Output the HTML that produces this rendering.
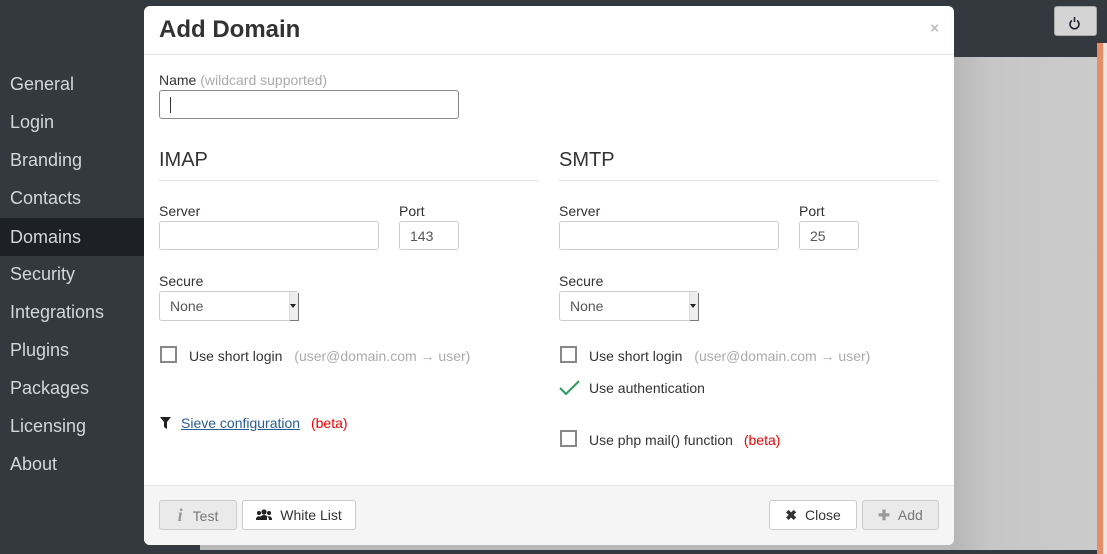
<!DOCTYPE html>
<html><head><style>
*{box-sizing:border-box}
body{margin:0;width:1107px;height:554px;overflow:hidden;background:#343940;font-family:"Liberation Sans",sans-serif;position:relative;color:#333}
.side{position:absolute;left:0;top:0;width:144px}
.side div{position:absolute;left:0;width:144px;height:38px;line-height:38px;padding-left:10px;font-size:18px;color:#d4d6d8}
.sel{background:#1d2024}
.gray{position:absolute;left:200px;top:57px;width:897px;height:493px;background:linear-gradient(90deg,#b8b8b8 755px,#c6c6c6 790px,#cbcbcb)}
.orange{position:absolute;left:1097px;top:43px;width:6px;height:511px;background:#e88c66}
.orange2{position:absolute;left:1103px;top:43px;width:4px;height:511px;background:#e6e6e6}
.pwr{position:absolute;left:1054px;top:6px;width:43px;height:30px;background:#d4d4d4;border:1px solid #aaa;border-radius:3px}
.modal{position:absolute;left:144px;top:6px;width:810px;height:539px;background:#fff;border-radius:6px;overflow:hidden}
.hdr{height:49px;border-bottom:1px solid #e5e5e5;padding:10px 15px}
.hdr h3{margin:0;font-size:24px;font-weight:bold;color:#333}
.x{position:absolute;right:15px;top:14px;color:#bbb;font-size:15px;font-weight:bold}
.abs{position:absolute;font-size:14px}
.inp{position:absolute;border:1px solid #ccc;border-radius:3px;height:29px;background:#fff;font-size:14px;padding:6px 10px;color:#555}
.h{position:absolute;font-size:20px;color:#333}
.line{position:absolute;height:1px;background:#e5e5e5}
.cb{position:absolute;width:17px;height:17px;border:2px solid #888}
.muted{color:#aaa}
.red{color:#e00}
.foot{position:absolute;left:0;top:479px;width:810px;height:60px;background:#f5f5f5;border-top:1px solid #e5e5e5}
.btn{position:absolute;top:14px;height:30px;border:1px solid #ccc;border-radius:3px;background:#fff;font-size:14px;line-height:28px;text-align:center;color:#333}
.dis{background:#eaeaea;color:#777}
.sel2{position:absolute;width:140px;height:30px;border:1px solid #ccc;border-radius:3px;font-size:14px;padding:6px 10px;color:#555;background:#fff}
.sel2:after{content:"";position:absolute;right:0;top:0;width:8px;height:28px;background:#eee;border-left:1px solid #ddd;box-shadow:1px 1px 0 #777}
.sel2:before{content:"";position:absolute;right:2px;top:12px;border:3px solid transparent;border-top:4px solid #222;z-index:2}
</style></head><body>
<div class="side">
<div style="top:65px">General</div><div style="top:103px">Login</div><div style="top:141px">Branding</div><div style="top:179px">Contacts</div><div class="sel" style="top:218px">Domains</div><div style="top:255px">Security</div><div style="top:293px">Integrations</div><div style="top:331px">Plugins</div><div style="top:369px">Packages</div><div style="top:407px">Licensing</div><div style="top:445px">About</div>
</div>
<div class="gray"></div><div class="orange"></div><div class="orange2"></div>
<div class="pwr"><svg width="43" height="30"><path d="M17 13.5a4.5 4.5 0 1 0 5 0" fill="none" stroke="#223" stroke-width="1.6"/><path d="M19.5 10v5" stroke="#223" stroke-width="1.6"/></svg></div>
<div class="modal">
<div class="hdr"><h3>Add Domain</h3></div><div class="x">×</div>
<div class="abs" style="left:15px;top:66px">Name <span class="muted">(wildcard supported)</span></div>
<div class="inp" style="left:15px;top:84px;width:300px;border-color:#888"><span style="display:inline-block;width:1px;height:16px;background:#333"></span></div>
<div class="h" style="left:15px;top:143px">IMAP</div><div class="line" style="left:15px;top:174px;width:380px"></div>
<div class="h" style="left:415px;top:143px">SMTP</div><div class="line" style="left:415px;top:174px;width:380px"></div>

<div class="abs" style="left:15px;top:197px">Server</div><div class="abs" style="left:255px;top:197px">Port</div>
<div class="inp" style="left:15px;top:215px;width:220px"></div><div class="inp" style="left:255px;top:215px;width:60px">143</div>
<div class="abs" style="left:15px;top:267px">Secure</div><div class="sel2" style="left:15px;top:285px">None</div>
<div class="cb" style="left:16px;top:340px"></div><div class="abs" style="left:45px;top:342px">Use short login <span class="muted" style="margin-left:8px">(user@domain.com → user)</span></div>
<div class="abs" style="left:16px;top:410px"><svg width="12" height="12"><path d="M0 0h11L7 5v7L4 10V5z" fill="#222"/></svg></div>
<div class="abs" style="left:37px;top:409px"><u style="color:#2a5b8f">Sieve configuration</u> <span class="red" style="margin-left:7px">(beta)</span></div>

<div class="abs" style="left:415px;top:197px">Server</div><div class="abs" style="left:655px;top:197px">Port</div>
<div class="inp" style="left:415px;top:215px;width:220px"></div><div class="inp" style="left:655px;top:215px;width:60px">25</div>
<div class="abs" style="left:415px;top:267px">Secure</div><div class="sel2" style="left:415px;top:285px">None</div>
<div class="cb" style="left:416px;top:340px"></div><div class="abs" style="left:445px;top:342px">Use short login <span class="muted" style="margin-left:8px">(user@domain.com → user)</span></div>
<div class="abs" style="left:415px;top:374px"><svg width="22" height="16"><path d="M1 8l6 6L20 1" fill="none" stroke="#2a9a5a" stroke-width="2"/></svg></div>
<div class="abs" style="left:445px;top:374px">Use authentication</div>
<div class="cb" style="left:416px;top:424px"></div><div class="abs" style="left:445px;top:426px">Use php mail() function <span class="red" style="margin-left:7px">(beta)</span></div>

<div class="foot">
<div class="btn dis" style="left:15px;width:78px"><i style="font-family:'Liberation Serif';font-weight:bold;color:#999;font-size:18px;margin-right:10px">i</i>Test</div>
<div class="btn" style="left:98px;width:114px"><svg width="16" height="12" style="margin-right:8px;vertical-align:-1px"><circle cx="8" cy="3" r="2.6" fill="#222"/><circle cx="3" cy="4" r="2" fill="#222"/><circle cx="13" cy="4" r="2" fill="#222"/><path d="M3 11a5 5 0 0 1 10 0z M0 10a3 3 0 0 1 5-2v3H0z M16 10a3 3 0 0 0-5-2v3h5z" fill="#222"/></svg>White List</div>
<div class="btn" style="left:625px;width:88px"><b style="margin-right:8px">✖</b>Close</div>
<div class="btn dis" style="left:718px;width:77px"><b style="color:#999;margin-right:8px">✚</b>Add</div>
</div>
</div>
</body></html>
